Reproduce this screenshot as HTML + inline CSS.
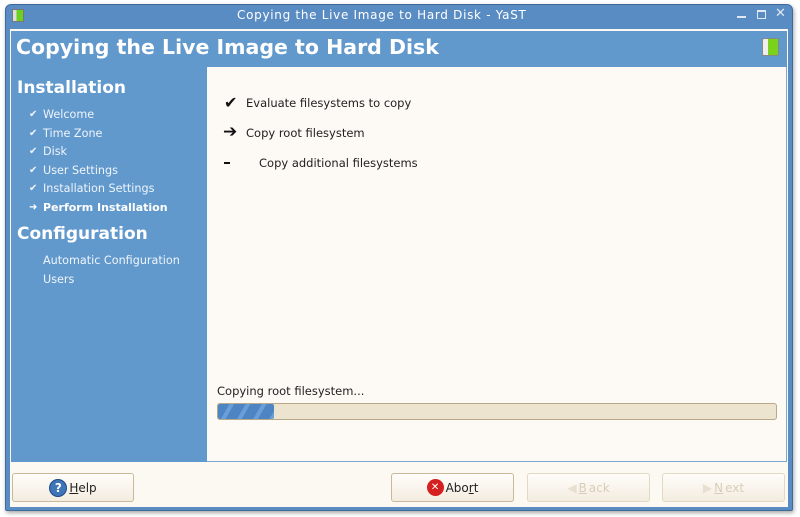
<!DOCTYPE html>
<html><head><style>
*{margin:0;padding:0;box-sizing:border-box}
body{width:800px;height:517px;background:#fff;position:relative;overflow:hidden;font-family:"DejaVu Sans","Liberation Sans",sans-serif}
.a{position:absolute;white-space:nowrap}
.win{left:5px;top:4px;width:788px;height:507px;background:#5a8cc4;border:1px solid #3f6b9c;border-radius:6px 6px 2px 2px;box-shadow:1px 2px 4px rgba(0,0,0,.35)}
.body{left:10px;top:29px;width:778px;height:478px;background:#fcf8f2}
.hdr{left:11px;top:31px;width:776px;height:36px;background:#6299cc}
.side{left:11px;top:67px;width:196px;height:395px;background:#6299cc}
.cont{left:207px;top:67px;width:580px;height:395px;background:#fdf9f5;border-right:1px solid #7aa6d4;border-bottom:1px solid #7aa6d4}
.w{color:#fff}
.s{font-size:11.2px;color:#eef4fb}
.k{font-size:10px;color:#eef4fb}
.c{font-size:11.5px;color:#222}
.btn{height:29px;border:1px solid #c9b99a;border-radius:3px;background:linear-gradient(#fffdfa,#f3ece0);font-size:12px;color:#222;display:flex;align-items:center;justify-content:center;gap:2px}
.dis{color:#d8cdb8;border-color:#e3d8c4}
</style></head><body>
<div class="a win"></div>
<div class="a" style="left:12px;top:9px;width:12px;height:13px;background:linear-gradient(90deg,#ddd 0 35%,#6cd020 35%);border:1px solid #777"></div>
<div class="a w" style="left:237px;top:8px;font-size:12px;letter-spacing:.7px">Copying the Live Image to Hard Disk - YaST</div>
<div class="a" style="left:737px;top:16px;width:9px;height:2px;background:#dfe8f3"></div>
<div class="a" style="left:757px;top:10px;width:9px;height:9px;border:1px solid #dfe8f3;border-top-width:2px"></div>
<div class="a w" style="left:775px;top:6px;font-size:13px;font-weight:bold;color:#dfe8f3">✕</div>
<div class="a body"></div>
<div class="a hdr"></div>
<div class="a w" style="left:16px;top:35px;font-size:20.5px;font-weight:bold">Copying the Live Image to Hard Disk</div>
<div class="a" style="left:762px;top:38px;width:17px;height:18px;background:linear-gradient(90deg,#eee 0 35%,#7ad21c 35%);border:1px solid #888;border-radius:2px"></div>
<div class="a side"></div>
<div class="a w" style="left:17px;top:78px;font-size:17px;font-weight:bold">Installation</div>
<div class="a k" style="left:29px;top:109px">✔</div><div class="a s" style="left:43px;top:108px">Welcome</div>
<div class="a k" style="left:29px;top:128px">✔</div><div class="a s" style="left:43px;top:127px">Time Zone</div>
<div class="a k" style="left:29px;top:146px">✔</div><div class="a s" style="left:43px;top:145px">Disk</div>
<div class="a k" style="left:29px;top:165px">✔</div><div class="a s" style="left:43px;top:164px">User Settings</div>
<div class="a k" style="left:29px;top:183px">✔</div><div class="a s" style="left:43px;top:182px">Installation Settings</div>
<div class="a k" style="left:29px;top:202px;color:#fff">➜</div><div class="a s" style="left:43px;top:201px;font-weight:bold;color:#fff;font-size:11px">Perform Installation</div>
<div class="a w" style="left:17px;top:224px;font-size:17px;font-weight:bold">Configuration</div>
<div class="a s" style="left:43px;top:254px">Automatic Configuration</div>
<div class="a s" style="left:43px;top:273px">Users</div>
<div class="a cont"></div>
<div class="a" style="left:224px;top:93px;font-size:16px;color:#111">✔</div>
<div class="a c" style="left:246px;top:96px">Evaluate filesystems to copy</div>
<div class="a" style="left:223px;top:122px;font-size:17px;color:#111;font-weight:bold">➔</div>
<div class="a c" style="left:246px;top:126px">Copy root filesystem</div>
<div class="a" style="left:224px;top:162px;width:6px;height:2px;background:#111"></div>
<div class="a c" style="left:259px;top:156px">Copy additional filesystems</div>
<div class="a c" style="left:217px;top:384px">Copying root filesystem...</div>
<div class="a" style="left:217px;top:403px;width:560px;height:17px;background:#ede4d0;border:1px solid #b8a887;border-radius:3px"></div>
<div class="a" style="left:218px;top:404px;width:56px;height:15px;background:repeating-linear-gradient(120deg,#4d85c4 0 10px,#6a9ed6 10px 14px);border-radius:2px"></div>
<div class="a btn" style="left:12px;top:473px;width:122px">
<span style="display:block;width:18px;height:18px;border-radius:50%;background:#3e74b8;border:1px solid #1d4a85;color:#fff;font-weight:bold;font-size:12px;line-height:16px;text-align:center">?</span><span><u>H</u>elp</span></div>
<div class="a btn" style="left:391px;top:473px;width:123px">
<span style="display:block;width:17px;height:17px;border-radius:50%;background:#d42020;color:#fff;font-weight:bold;font-size:10px;line-height:17px;text-align:center">✕</span><span>Abo<u>r</u>t</span></div>
<div class="a btn dis" style="left:527px;top:473px;width:123px"><span style="color:#e8dfd0">◀</span> <u>B</u>ack</div>
<div class="a btn dis" style="left:662px;top:473px;width:123px"><span style="color:#e8dfd0">▶</span> <u>N</u>ext</div>
</body></html>
